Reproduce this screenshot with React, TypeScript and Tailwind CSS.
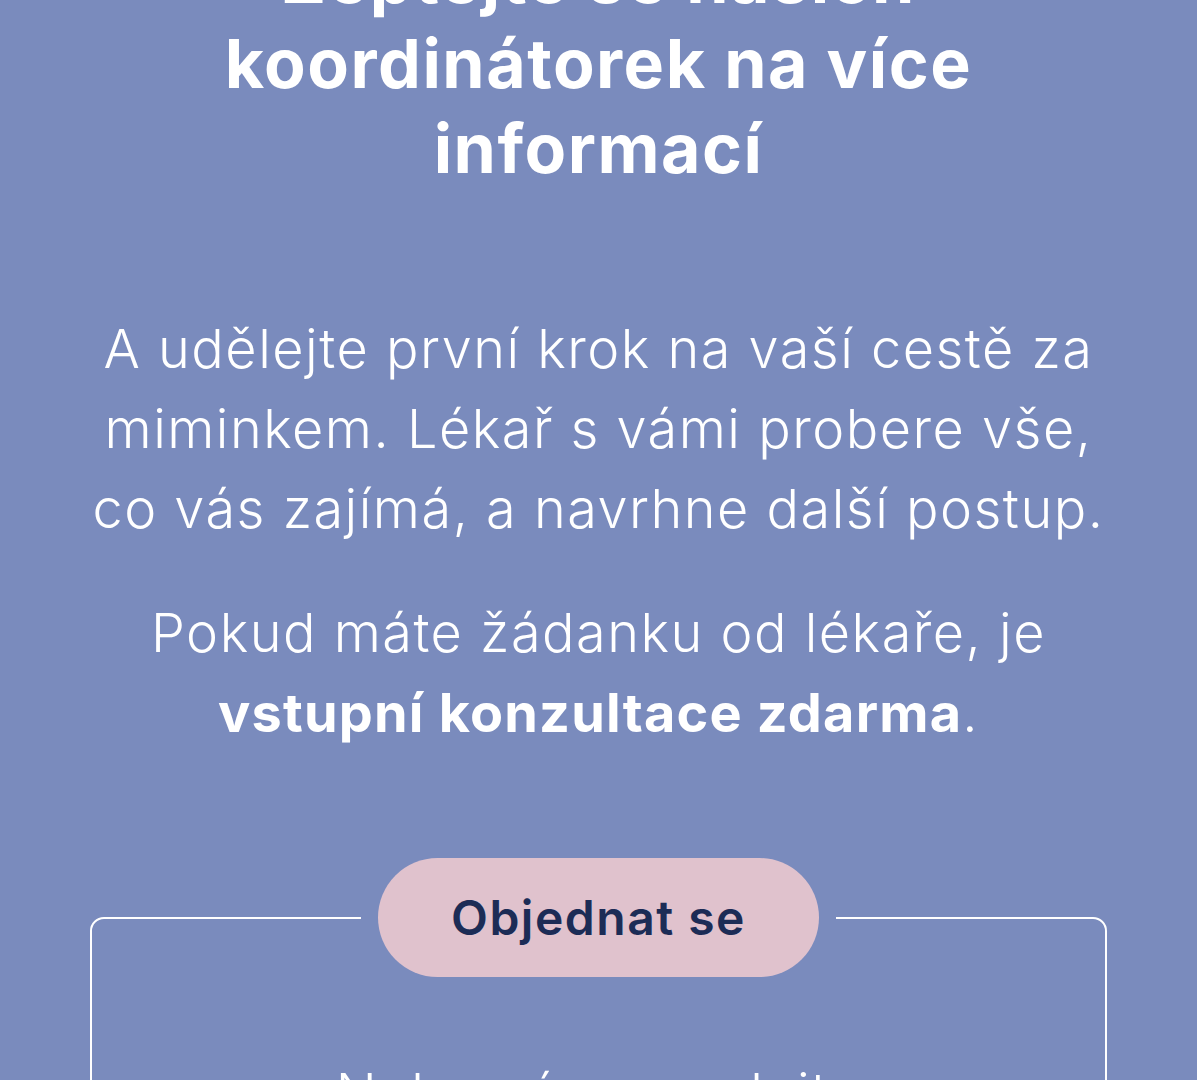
export default function App() {
  return (
    <div className="min-h-screen w-full overflow-hidden bg-[#7a8bbd] text-white font-['Inter','Noto_Sans',sans-serif]">
      <section className="-mt-[64px] flex flex-col items-center px-[90px] pb-24">
        <h2 className="text-center text-[68px] font-bold leading-[85px] tracking-[1.5px]">
          Zeptejte se našich
          <br />
          koordinátorek na více
          <br />
          informací
        </h2>

        <p className="mt-[118px] text-center text-[54px] font-light leading-[80px] tracking-[1.5px]">
          A udělejte první krok na vaší cestě za
          <br />
          miminkem. Lékař s vámi probere vše,
          <br />
          co vás zajímá, a navrhne další postup.
        </p>

        <p className="mt-[44px] text-center text-[54px] font-light leading-[80px] tracking-[1.5px]">
          Pokud máte žádanku od lékaře, je
          <br />
          <strong className="font-bold tracking-[1.2px]">vstupní konzultace zdarma</strong>.
        </p>

        <fieldset className="mt-[105px] w-full rounded-[14px] border-2 border-white px-10 pb-16">
          <legend className="mx-auto px-[17px]">
            <a
              href="#"
              className="flex h-[119px] w-[441px] items-center justify-center rounded-full bg-[#e0c2cd] text-[48px] font-semibold tracking-[1.5px] text-[#1c2c56]"
            >
              Objednat se
            </a>
          </legend>
          <p className="mt-[76px] text-center text-[54px] font-light leading-[80px] tracking-[1.5px]">
            Nebo nám zavolejte
          </p>
        </fieldset>
      </section>
    </div>
  );
}
